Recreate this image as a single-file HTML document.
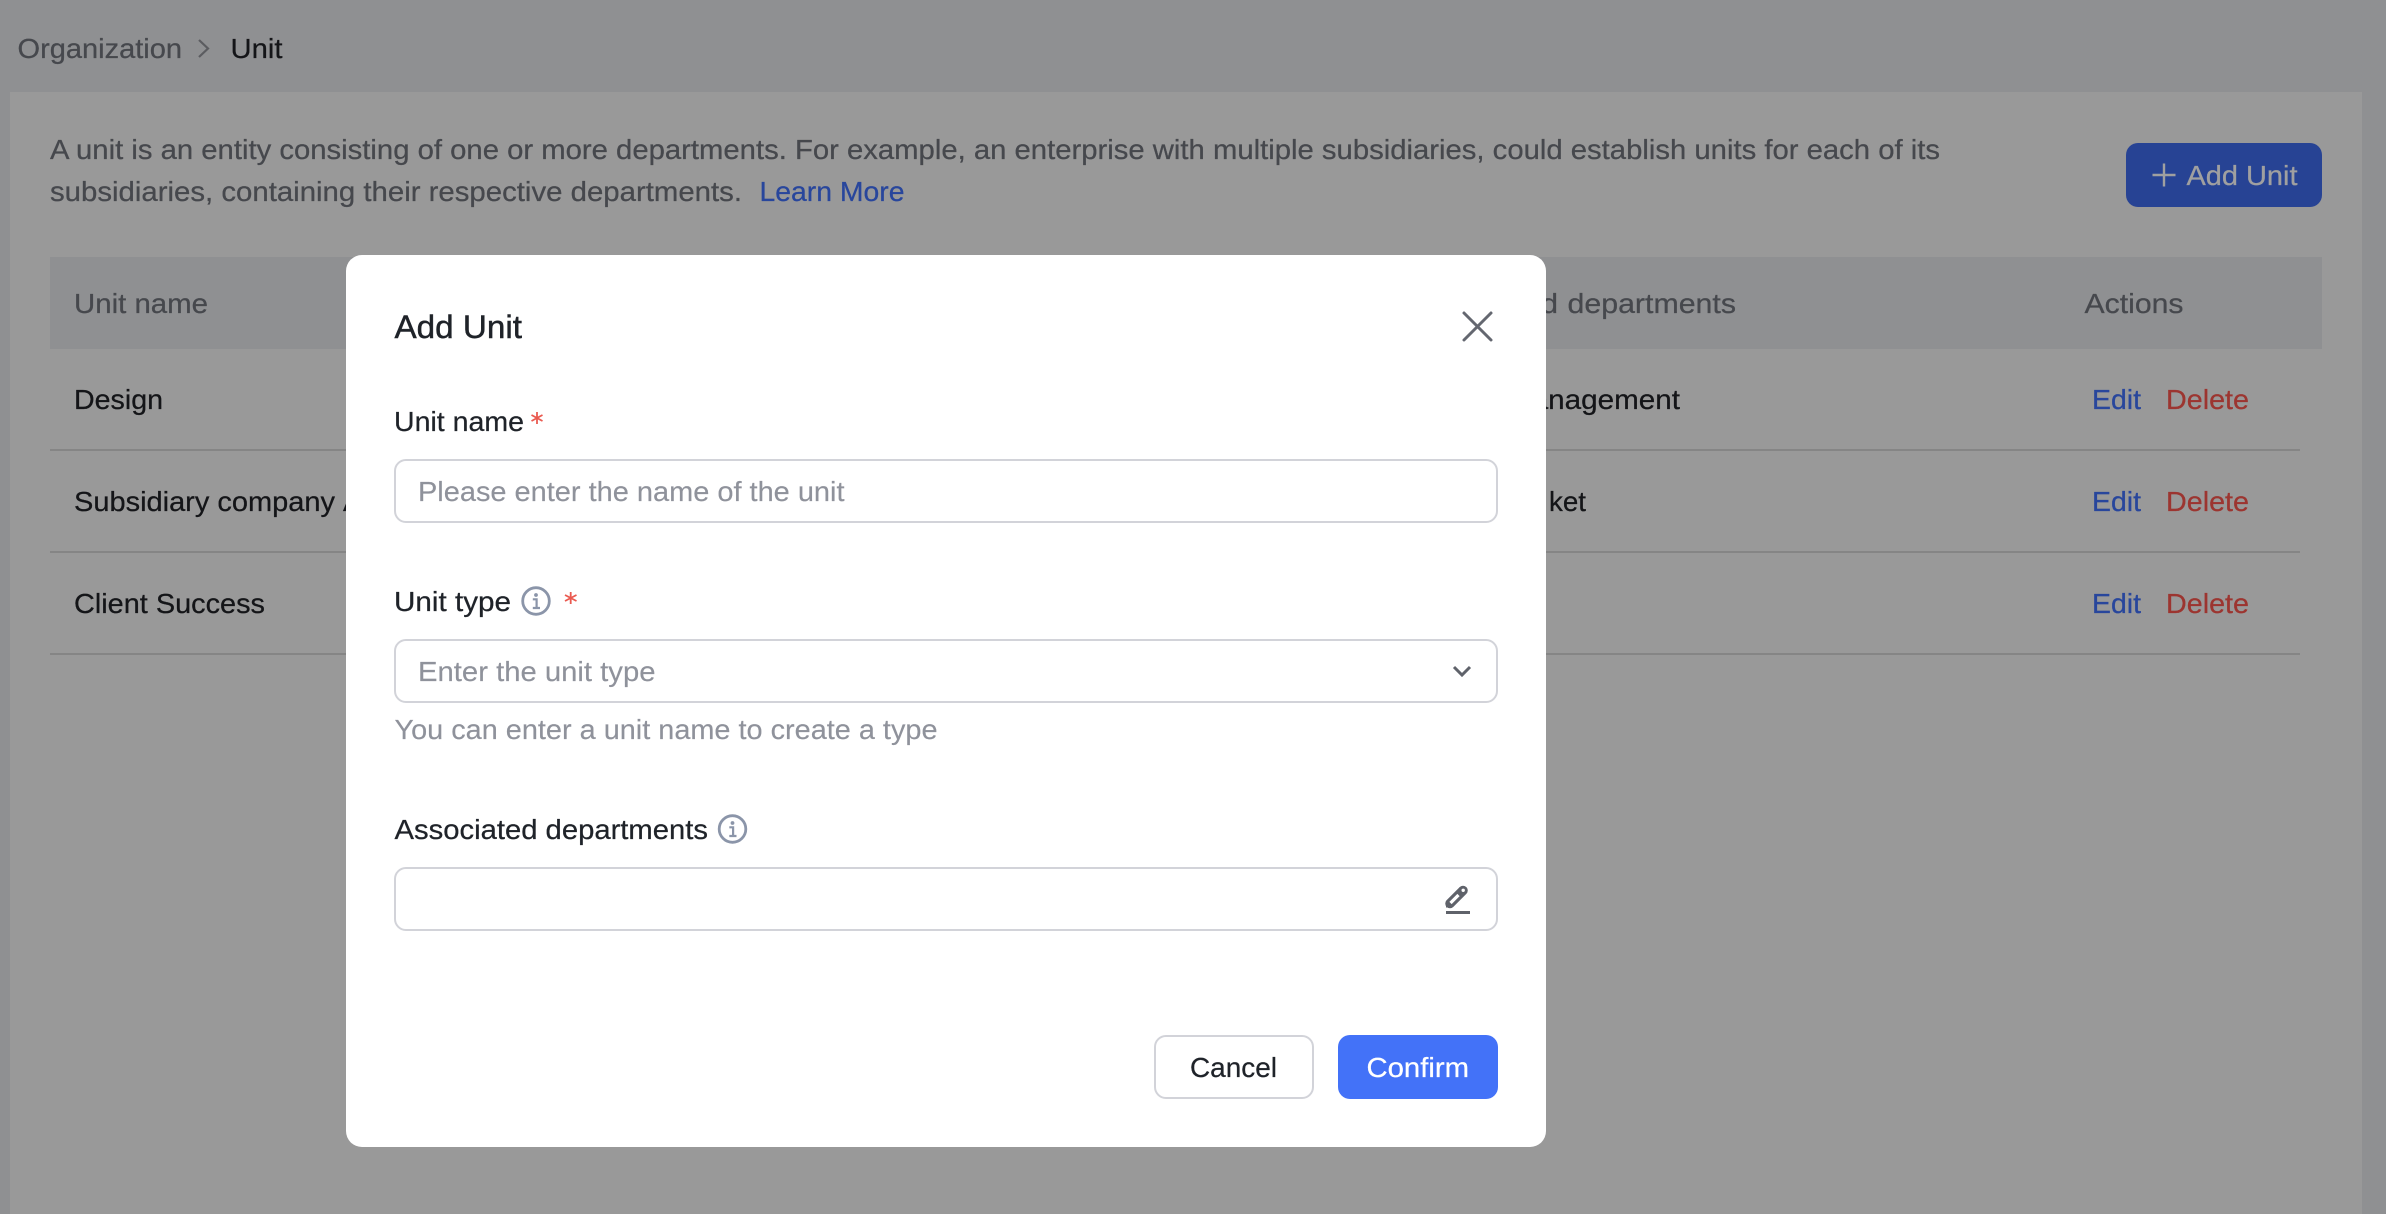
<!DOCTYPE html>
<html lang="en">
<head>
<meta charset="utf-8">
<title>Unit</title>
<style>
html,body{margin:0;padding:0;background:#8f9092;width:2386px;height:1214px;overflow:hidden}
svg{display:block}
text{font-family:"Liberation Sans",Arial,sans-serif;font-size:28px;stroke-width:.25px}
.g{fill:#46484d;stroke:#46484d}
.k{fill:#141518;stroke:#141518}
.b{fill:#28469c;stroke:#28469c}
.r{fill:#9c3530;stroke:#9c3530}
.d{fill:#1f2329;stroke:#1f2329}
.p{fill:#8f929b;stroke:#8f929b;stroke-width:.15px}
.w{fill:#ffffff;stroke:#ffffff}
.a{fill:#a0a0a0;stroke:#a0a0a0}
</style>
</head>
<body>
<svg width="2386" height="1214" viewBox="0 0 2386 1214" xmlns="http://www.w3.org/2000/svg">
  <rect width="2386" height="1214" fill="#8f9092"/>
  <rect x="10" y="92" width="2352" height="1122" fill="#999999"/>

  <!-- breadcrumb -->
  <text x="17.500" y="58" class="g" textLength="164.500" lengthAdjust="spacingAndGlyphs">Organization</text>
  <path d="M199 40L208 48.500L199 57" fill="none" stroke="#5b5c60" stroke-width="2.200"/>
  <text x="230.500" y="58" class="k" textLength="52" lengthAdjust="spacingAndGlyphs">Unit</text>

  <!-- description -->
  <text x="50" y="159" class="g" textLength="1890" lengthAdjust="spacingAndGlyphs">A unit is an entity consisting of one or more departments. For example, an enterprise with multiple subsidiaries, could establish units for each of its</text>
  <text x="50" y="201" class="g" textLength="692" lengthAdjust="spacingAndGlyphs">subsidiaries, containing their respective departments.</text>
  <text x="759.500" y="201" class="b" textLength="145" lengthAdjust="spacingAndGlyphs">Learn More</text>

  <!-- add button -->
  <rect x="2126" y="143" width="196" height="64" rx="12" fill="#274394"/>
  <path d="M2164 163.500V186.500M2152.500 175H2175.500" stroke="#a0a0a0" stroke-width="2.400" fill="none"/>
  <text x="2186.500" y="185" class="a" textLength="111" lengthAdjust="spacingAndGlyphs">Add Unit</text>

  <!-- table -->
  <rect x="50" y="257" width="2272" height="92" fill="#8f9092"/>
  <text x="74" y="313" class="g" textLength="134" lengthAdjust="spacingAndGlyphs">Unit name</text>
  <text x="1408" y="313" class="g" textLength="150" lengthAdjust="spacingAndGlyphs">Associated</text>
  <text x="1567.500" y="313" class="g" textLength="168.500" lengthAdjust="spacingAndGlyphs">departments</text>
  <text x="2084.500" y="313" class="g" textLength="99" lengthAdjust="spacingAndGlyphs">Actions</text>

  <text x="74" y="409" class="k" textLength="89" lengthAdjust="spacingAndGlyphs">Design</text>
  <text x="1507" y="409" class="k" textLength="173" lengthAdjust="spacingAndGlyphs">management</text>
  <text x="2092" y="409" class="b" textLength="49" lengthAdjust="spacingAndGlyphs">Edit</text>
  <text x="2166" y="409" class="r" textLength="83" lengthAdjust="spacingAndGlyphs">Delete</text>
  <rect x="50" y="449" width="2250" height="2" fill="#858585"/>

  <text x="74" y="511" class="k" textLength="261" lengthAdjust="spacingAndGlyphs">Subsidiary company</text>
  <text x="343" y="511" class="k">A</text>
  <text x="1490" y="511" class="k" textLength="50" lengthAdjust="spacingAndGlyphs">Mar</text>
  <text x="1549" y="511" class="k" textLength="37" lengthAdjust="spacingAndGlyphs">ket</text>
  <text x="2092" y="511" class="b" textLength="49" lengthAdjust="spacingAndGlyphs">Edit</text>
  <text x="2166" y="511" class="r" textLength="83" lengthAdjust="spacingAndGlyphs">Delete</text>
  <rect x="50" y="551" width="2250" height="2" fill="#858585"/>

  <text x="74" y="613" class="k" textLength="191" lengthAdjust="spacingAndGlyphs">Client Success</text>
  <text x="2092" y="613" class="b" textLength="49" lengthAdjust="spacingAndGlyphs">Edit</text>
  <text x="2166" y="613" class="r" textLength="83" lengthAdjust="spacingAndGlyphs">Delete</text>
  <rect x="50" y="653" width="2250" height="2" fill="#858585"/>

  <!-- modal -->
  <rect x="346" y="255" width="1200" height="892" rx="16" fill="#ffffff"/>
  <text x="394.500" y="338" class="d" style="font-size:32px;stroke-width:.45px" textLength="127.500" lengthAdjust="spacingAndGlyphs">Add Unit</text>
  <path d="M1464 313L1491 340M1491 313L1464 340" stroke="#646770" stroke-width="3" stroke-linecap="round" fill="none"/>

  <!-- unit name -->
  <text x="394" y="431" class="d" textLength="130" lengthAdjust="spacingAndGlyphs">Unit name</text>
  <path d="M537 412V424M531.500 415L542.500 421M542.500 415L531.500 421" stroke="#ea5a50" stroke-width="1.800" fill="none"/>
  <rect x="395" y="460" width="1102" height="62" rx="11" fill="#fff" stroke="#d2d3d9" stroke-width="2"/>
  <text x="418" y="501" class="p" textLength="426.500" lengthAdjust="spacingAndGlyphs">Please enter the name of the unit</text>

  <!-- unit type -->
  <text x="394" y="611" class="d" textLength="117" lengthAdjust="spacingAndGlyphs">Unit type</text>
  <circle cx="536" cy="601" r="13.300" fill="none" stroke="#8b95a9" stroke-width="2.800"/>
  <circle cx="536" cy="595" r="1.900" fill="#8b95a9"/>
  <path d="M532.800 599.300H536.600V607.500M532.800 608H540" fill="none" stroke="#8b95a9" stroke-width="2.200"/>
  <path d="M570.700 592V604M565 595L576.500 601M576.500 595L565 601" stroke="#ea5a50" stroke-width="1.800" fill="none"/>
  <rect x="395" y="640" width="1102" height="62" rx="11" fill="#fff" stroke="#d2d3d9" stroke-width="2"/>
  <text x="418" y="681" class="p" textLength="237.500" lengthAdjust="spacingAndGlyphs">Enter the unit type</text>
  <path d="M1454 667L1462 675L1470 667" fill="none" stroke="#5f626a" stroke-width="3"/>
  <text x="394.500" y="739" class="p" textLength="543" lengthAdjust="spacingAndGlyphs">You can enter a unit name to create a type</text>

  <!-- associated departments -->
  <text x="394.500" y="839" class="d" textLength="313.500" lengthAdjust="spacingAndGlyphs">Associated departments</text>
  <circle cx="732.500" cy="829" r="13.300" fill="none" stroke="#8b95a9" stroke-width="2.800"/>
  <circle cx="732.500" cy="823" r="1.900" fill="#8b95a9"/>
  <path d="M729.300 827.300H733.100V835.500M729.300 836H736.500" fill="none" stroke="#8b95a9" stroke-width="2.200"/>
  <rect x="395" y="868" width="1102" height="62" rx="11" fill="#fff" stroke="#d2d3d9" stroke-width="2"/>
  <path d="M1450 903.500L1463 890.500" stroke="#5f626a" stroke-width="9.500" stroke-linecap="round" fill="none"/>
  <path d="M1446 901.500V907.500H1452Z" fill="#5f626a"/>
  <path d="M1450.500 903L1458.500 895" stroke="#fff" stroke-width="3.200" fill="none"/>
  <circle cx="1463.200" cy="890.300" r="1.700" fill="#fff"/>
  <rect x="1446" y="911" width="24" height="3" fill="#5f626a"/>

  <!-- footer buttons -->
  <rect x="1155" y="1036" width="158" height="62" rx="11" fill="#fff" stroke="#d2d3d9" stroke-width="2"/>
  <text x="1190" y="1077" class="d" textLength="87" lengthAdjust="spacingAndGlyphs">Cancel</text>
  <rect x="1338" y="1035" width="160" height="64" rx="12" fill="#4372f8"/>
  <text x="1366.500" y="1077" class="w" textLength="102.500" lengthAdjust="spacingAndGlyphs">Confirm</text>
</svg>
</body>
</html>
